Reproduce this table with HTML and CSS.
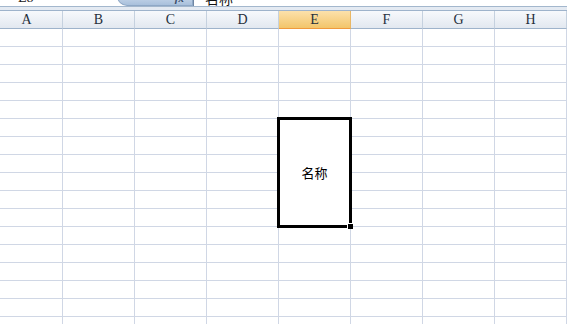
FILE: index.html
```html
<!DOCTYPE html>
<html>
<head>
<meta charset="utf-8">
<link rel="stylesheet" href="styles.css">
</head>
<body>
<div class="formula-bar">
  <div class="fb-inner">
    <div class="name-box">E8</div>
    <div class="fx-pill"><span class="fx">fx</span></div>
    <div class="fb-sep"></div>
    <div class="fb-text">名称</div>
  </div>
</div>
<div class="band"></div>
<div class="sheet">
  <div class="grid">
    <div class="hdr">A</div>
    <div class="hdr">B</div>
    <div class="hdr">C</div>
    <div class="hdr">D</div>
    <div class="hdr sel">E</div>
    <div class="hdr">F</div>
    <div class="hdr">G</div>
    <div class="hdr">H</div>
  </div>
  <div class="grid body" id="body">
    <div class="merged"><span>名称</span><div class="selbox"></div><div class="handle"></div></div>
  </div>
</div>
<script>
  var b = document.getElementById('body');
  for (var r = 1; r <= 17; r++) {
    for (var c = 1; c <= 8; c++) {
      if (c === 5 && r >= 6 && r <= 11) continue;
      var d = document.createElement('div');
      d.className = 'cell';
      d.style.gridRow = r;
      d.style.gridColumn = c;
      b.appendChild(d);
    }
  }
</script>
</body>
</html>
```
FILE: styles.css
```css
html, body {
  margin: 0;
  padding: 0;
  background: #ffffff;
  overflow: hidden;
  width: 567px;
  height: 324px;
}
.formula-bar {
  height: 6px;
  overflow: hidden;
  background: #ffffff;
  border-bottom: 1px solid #a3b7cd;
}
.fb-inner {
  display: flex;
  align-items: flex-end;
  height: 16px;
  margin-top: -10px;
}
.name-box {
  width: 117px;
  padding-left: 18px;
  box-sizing: border-box;
  font: 14px "Liberation Serif", serif;
  line-height: 16px;
  color: #222;
}
.fx-pill {
  width: 76px;
  height: 16px;
  border-radius: 0 0 0 10px;
  background: linear-gradient(#dbe6f3, #a9c0dc);
  border: 1px solid #8fa8c6;
  border-top: none;
  box-sizing: border-box;
  display: flex;
  justify-content: flex-end;
  align-items: flex-end;
  padding-right: 8px;
}
.fx {
  font: italic bold 11px "Liberation Serif", serif;
  color: #3a4b66;
  line-height: 14px;
}
.fb-sep {
  width: 1px;
  height: 16px;
  background: #6f86a3;
}
.fb-text {
  padding-left: 11px;
  font: 14px "Noto Sans CJK SC", sans-serif;
  line-height: 16px;
  color: #111;
}
.band {
  height: 3px;
  background: #e4eaf2;
  border-bottom: 1px solid #9eb3cb;
}
.sheet {
  margin-left: -9px;
}
.grid {
  display: grid;
  grid-template-columns: repeat(8, 72px);
}
.hdr {
  height: 17px;
  border-right: 1px solid #c5d1df;
  border-bottom: 1px solid #9eb3cb;
  background: linear-gradient(#f7f9fc, #e2e8f0);
  font: 14px "Liberation Serif", serif;
  color: #26303c;
  text-align: center;
  line-height: 18px;
}
.hdr.sel {
  background: linear-gradient(#fbe1ab, #f3c56a);
  border-bottom: 1px solid #f09a3c;
  border-right: 1px solid #e9b765;
}
.body {
  grid-template-rows: repeat(17, 18px);
}
.cell {
  border-right: 1px solid #d0d7e5;
  border-bottom: 1px solid #d0d7e5;
}
.merged {
  grid-column: 5;
  grid-row: 6 / 12;
  position: relative;
  border-right: 1px solid #d0d7e5;
  border-bottom: 1px solid #d0d7e5;
  display: flex;
  align-items: center;
  justify-content: center;
  font: 13px "Noto Sans CJK SC", sans-serif;
  color: #000;
}
.merged span {
  margin-top: -1px;
}
.selbox {
  position: absolute;
  left: -2px;
  top: -2px;
  right: -2px;
  bottom: -2px;
  border: 3px solid #000;
  box-sizing: border-box;
}
.handle {
  position: absolute;
  right: -3px;
  bottom: -3px;
  width: 5px;
  height: 5px;
  background: #000;
  border: 1px solid #fff;
  border-right: none;
  border-bottom: none;
}
```
